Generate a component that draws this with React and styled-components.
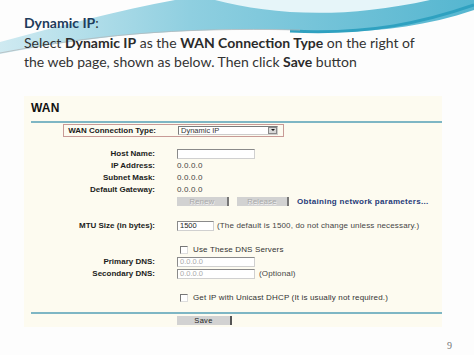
import React from 'react'
import styled, { createGlobalStyle } from 'styled-components'

const GlobalStyle = createGlobalStyle`
  html, body { margin: 0; padding: 0; background: #fdfdfd; }
  * { box-sizing: border-box; }
`

const Slide = styled.div`
  position: relative;
  width: 474px;
  height: 355px;
  overflow: hidden;
  background: #fdfdfd;
`

const Wave = styled.svg`
  position: absolute;
  top: 0;
  left: 0;
  width: 474px;
  height: 70px;
`

const Heading = styled.div`
  position: relative;
  padding: 13px 0 0 24px;
  font-family: Lato, "Open Sans", sans-serif;
  font-size: 14px;
  line-height: 19.5px;
  color: #333;
  b { font-weight: 700; color: #2b2b2b; }
`

const Title = styled.div`
  b { color: #1d3c5c; }
`

const Panel = styled.div`
  margin: 24px 0 0 24px;
  width: 418px;
  height: 231px;
  background: #fdfbf0;
  padding: 5px 0 0 7px;
  font-family: "Liberation Sans", Arial, sans-serif;
  font-size: 8px;
  color: #222;
`

const PanelTitle = styled.div`
  font-weight: 700;
  font-size: 12px;
  line-height: 14px;
  color: #111;
  letter-spacing: 0.2px;
`

const Rule = styled.div`
  height: 2px;
  background: #7eb6c4;
  margin-top: ${p => p.$top || 0}px;
`

const Form = styled.div`
  padding-left: 32px;
`

const Row = styled.div`
  display: flex;
  align-items: center;
  height: 12px;
  margin-top: ${p => p.$top || 0}px;
`

const TypeBox = styled.div`
  display: flex;
  align-items: center;
  width: 221px;
  height: 13px;
  margin-top: 1px;
  border: 1px solid #c89a96;
`

const Label = styled.div`
  width: 92px;
  margin-right: 22px;
  text-align: right;
  font-weight: 700;
  color: #1b1b1b;
  white-space: nowrap;
`

const Value = styled.span`
  color: ${p => p.$muted ? '#999' : '#444'};
  white-space: nowrap;
  margin-left: ${p => p.$gap || 0}px;
  letter-spacing: 0.15px;
`

const Select = styled.div`
  display: flex;
  align-items: center;
  justify-content: space-between;
  width: 100px;
  height: 9px;
  background: #fff;
  border: 1px solid #7a7a7a;
  border-right-color: #ccc;
  border-bottom-color: #ccc;
  padding-left: 2px;
  color: #333;
  font-size: 7.5px;
`

const Arrow = styled.div`
  width: 9px;
  height: 7px;
  background: #d8d8d8;
  border: 1px solid #888;
  display: flex;
  align-items: center;
  justify-content: center;
  &::after {
    content: "";
    border-left: 2px solid transparent;
    border-right: 2px solid transparent;
    border-top: 2px solid #111;
  }
`

const Input = styled.div`
  width: ${p => p.$w || 78}px;
  height: 10px;
  background: #fff;
  border: 1px solid #8a8a8a;
  border-right-color: #d0d0d0;
  border-bottom-color: #d0d0d0;
  padding-left: 2px;
  font-size: 7.5px;
  line-height: 8px;
  color: ${p => p.$muted ? '#aaa' : '#222'};
`

const Button = styled.div`
  width: ${p => p.$w}px;
  height: 9px;
  margin-right: ${p => p.$mr || 0}px;
  background: #d2d2d2;
  border-right: 2px solid ${p => p.$disabled ? '#777' : '#555'};
  display: flex;
  align-items: center;
  justify-content: center;
  font-size: 7.5px;
  letter-spacing: 0.3px;
  color: ${p => p.$disabled ? '#a8a8a8' : '#222'};
  text-shadow: ${p => p.$disabled ? '0.5px 0.5px 0 #f4f4f4' : 'none'};
`

const Status = styled.span`
  font-weight: 700;
  color: #1f3a78;
  letter-spacing: 0.3px;
`

const Check = styled.div`
  display: flex;
  align-items: center;
  margin-left: 3px;
  color: #333;
  white-space: nowrap;
  letter-spacing: 0.15px;
  &::before {
    content: "";
    width: 6px;
    height: 6px;
    margin-right: 5px;
    background: #fff;
    border: 1px solid #777;
    border-right-color: #ddd;
    border-bottom-color: #ddd;
  }
`

const PageNum = styled.div`
  position: absolute;
  right: 22px;
  bottom: 4px;
  font-family: "Liberation Serif", serif;
  font-size: 10px;
  color: #777;
`

function App() {
  return (
    <Slide>
      <GlobalStyle />
      <Wave viewBox="0 0 474 70">
        <defs>
          <linearGradient id="band" x1="0" y1="0" x2="1" y2="0">
            <stop offset="0" stopColor="#cfeaf1" />
            <stop offset="0.4" stopColor="#8fcfe0" />
            <stop offset="1" stopColor="#55b6d0" />
          </linearGradient>
        </defs>
        <path d="M0,42 C60,26 120,10 175,0 L474,0 L474,10 C420,28 370,33 320,31 C220,27 120,30 0,54 Z" fill="url(#band)" />
        <path d="M215,0 C270,14 340,20 430,0 Z" fill="#e6f5f9" />
        <path d="M290,31 C370,35 425,22 474,5" stroke="#2fa1c0" strokeWidth="3" fill="none" />
        <path d="M0,53 C90,36 170,27 300,30" stroke="#b3b9bb" strokeWidth="0.8" fill="none" />
      </Wave>
      <Heading>
        <Title><b>Dynamic IP</b>:</Title>
        <div>Select <b>Dynamic IP</b> as the <b>WAN Connection Type</b> on the right of</div>
        <div>the web page, shown as below. Then click <b>Save</b> button</div>
      </Heading>
      <Panel>
        <PanelTitle>WAN</PanelTitle>
        <Rule $top={6} />
        <Form>
          <TypeBox>
            <Label>WAN Connection Type:</Label>
            <Select>Dynamic IP<Arrow /></Select>
          </TypeBox>
          <Row $top={11}><Label>Host Name:</Label><Input /></Row>
          <Row><Label>IP Address:</Label><Value>0.0.0.0</Value></Row>
          <Row><Label>Subnet Mask:</Label><Value>0.0.0.0</Value></Row>
          <Row><Label>Default Gateway:</Label><Value>0.0.0.0</Value></Row>
          <Row>
            <Label />
            <Button $w={52} $mr={8} $disabled>Renew</Button>
            <Button $w={52} $mr={8} $disabled>Release</Button>
            <Status>Obtaining network parameters...</Status>
          </Row>
          <Row $top={12}>
            <Label>MTU Size (in bytes):</Label>
            <Input $w={37}>1500</Input>
            <Value $gap={3}>(The default is 1500, do not change unless necessary.)</Value>
          </Row>
          <Row $top={12}><Label /><Check>Use These DNS Servers</Check></Row>
          <Row><Label>Primary DNS:</Label><Input $muted>0.0.0.0</Input></Row>
          <Row><Label>Secondary DNS:</Label><Input $muted>0.0.0.0</Input><Value $gap={4}>(Optional)</Value></Row>
          <Row $top={12}><Label /><Check>Get IP with Unicast DHCP (It is usually not required.)</Check></Row>
        </Form>
        <Rule $top={8} />
        <Form>
          <Row $top={1}><Label /><Button $w={55}>Save</Button></Row>
        </Form>
      </Panel>
      <PageNum>9</PageNum>
    </Slide>
  )
}

export default App
